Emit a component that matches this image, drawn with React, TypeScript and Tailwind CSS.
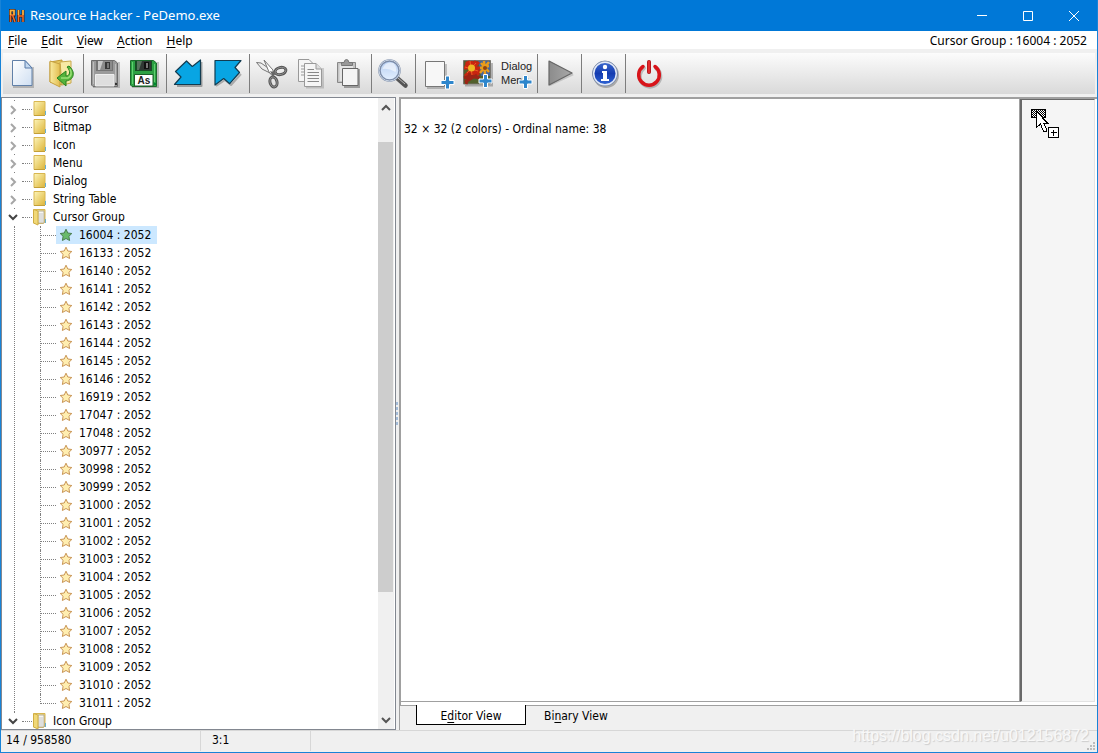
import React from 'react';

const folders = ['Cursor', 'Bitmap', 'Icon', 'Menu', 'Dialog', 'String Table'];
const cursorIds = [
  16004, 16133, 16140, 16141, 16142, 16143, 16144, 16145, 16146, 16919, 17047, 17048, 30977, 30998, 30999,
  31000, 31001, 31002, 31003, 31004, 31005, 31006, 31007, 31008, 31009, 31010, 31011,
];

function Key({ text, at = 0 }: { text: string; at?: number }) {
  return (
    <>
      {text.slice(0, at)}
      <span className="underline underline-offset-2">{text[at]}</span>
      {text.slice(at + 1)}
    </>
  );
}

/* ---------- toolbar ---------- */

function Plus({ x, y }: { x: number; y: number }) {
  return (
    <path
      transform={`translate(${x} ${y})`}
      d="M-2 -6.500H2V-2H6.500V2H2V6.500H-2V2H-6.500V-2H-2Z"
      fill="#2e86cc"
      stroke="#fff"
      strokeWidth="1"
    />
  );
}

function Floppy({ green }: { green?: boolean }) {
  return (
    <g>
      <path d="M7 33H33V8" stroke="#000" strokeOpacity=".2" strokeWidth="2" fill="none" />
      <path d="M5.500 6.500H28.500L31.500 9V32.500H7L5.500 31Z" fill={green ? '#2ca043' : '#9a9a9a'} stroke={green ? '#1c6a2c' : '#6c6c6c'} />
      <path d="M7.500 8V30M29.500 10V28" stroke={green ? '#5fd070' : '#bdbdbd'} />
      <path d="M10 7H27V17H10Z" fill={green ? '#174d25' : '#747474'} />
      <path d="M13 7H26V16H13Z" fill={green ? '#303834' : '#8b8b8b'} />
      <path d="M12 7H17L14 16H12Z" fill={green ? '#57735d' : '#c8c8c8'} />
      <path d="M19 8H24V15H19Z" fill={green ? '#101010' : '#383838'} />
      <path d="M21 9H23V14H21Z" fill="#777" />
      <path d="M9.500 20.500H28V32H9.500Z" fill={green ? '#fff' : '#dedede'} stroke={green ? '#1c5d2a' : '#eee'} />
      {green && (
        <text x="19" y="30" textAnchor="middle" fontFamily="Liberation Sans, sans-serif" fontSize="10" fontWeight="700" fill="#222">
          As
        </text>
      )}
      <path d="M29 29H31V31H29Z" fill={green ? '#083' : '#333'} />
    </g>
  );
}

const art: Record<string, React.ReactNode> = {
  New: (
    <g>
      <path d="M10 33H30V13" fill="none" stroke="#000" strokeOpacity=".2" strokeWidth="2" />
      <path d="M9.500 6.500H22L29 14V31.500H9.500Z" fill="url(#paper)" stroke="#6180a8" />
      <path d="M22 6.500V14H29Z" fill="#c3d8ef" stroke="#587ba9" />
    </g>
  ),
  Open: (
    <g>
      <path d="M8 8L20 6V31L8 28Z" fill="#e5c75e" stroke="#c09a35" />
      <path d="M18 8L29 7V29L20 31Z" fill="#f7e9a4" stroke="#c8a84c" />
      <path d="M8 7L18 10V33L8 28Z" fill="url(#gold)" stroke="#c6a040" />
      <path d="M27 12C34 18 32 26 24 27V32L15 24L24 17V22C28 22 29 17 25 13Z" fill="#55b43c" stroke="#28811f" />
      <path d="M28 15Q31 21 26 24L19 24" fill="none" stroke="#99df76" strokeWidth="1.500" />
    </g>
  ),
  Save: <Floppy />,
  'Save As': <Floppy green />,
  Compile: (
    <g strokeLinejoin="round">
      <path d="M32.500 8V32H8" stroke="#000" strokeOpacity=".3" strokeWidth="2" fill="none" />
      <path d="M31.500 6V30.500H5.500L12 23L6.500 17.500L17.500 7L23.300 12.500Z" fill="#08a5e3" stroke="#123c51" strokeWidth="1.200" />
    </g>
  ),
  Decompile: (
    <g strokeLinejoin="round">
      <path d="M8 32L17 26L23 31L33 20" stroke="#000" strokeOpacity=".25" strokeWidth="2" fill="none" />
      <path d="M7 6.500H33L27 13.500L31.500 18.500L21.700 29.700L15.700 24.500L7 31Z" fill="#08a5e3" stroke="#123c51" strokeWidth="1.200" />
    </g>
  ),
  Cut: (
    <g>
      <path d="M4.500 8.500L9 9L22 18L20 20L10 15Z" fill="#eee" stroke="#777" />
      <path d="M12 6L21 16L20.500 22L17 18Z" fill="#fff" stroke="#777" />
      <ellipse cx="28.500" cy="17" rx="5.500" ry="3.500" transform="rotate(-15 28.500 17)" fill="none" stroke="#555" strokeWidth="3" />
      <ellipse cx="21.500" cy="28" rx="3.500" ry="5" transform="rotate(-15 21.500 28)" fill="none" stroke="#555" strokeWidth="3" />
      <path d="M18 17L24 19L21 23Z" fill="#666" />
      <ellipse cx="28.500" cy="17" rx="5.500" ry="3.500" transform="rotate(-15 28.500 17)" fill="none" stroke="#999" strokeWidth=".8" />
      <ellipse cx="21.500" cy="28" rx="3.500" ry="5" transform="rotate(-15 21.500 28)" fill="none" stroke="#999" strokeWidth=".8" />
    </g>
  ),
  Copy: (
    <g fill="#f5f5f5" stroke="#999">
      <path d="M7.500 5.500H18L23.500 11V27.500H7.500Z" />
      <path d="M10 12H16M10 15H16M10 18H16M10 21H16" />
      <path d="M15 33.500H32V14" fill="none" stroke="#000" strokeOpacity=".15" strokeWidth="2" />
      <path d="M13.500 9.500H25L30.500 15V32.500H13.500Z" />
      <path d="M25 9.500V15H30.500" fill="#ddd" />
      <path d="M16.500 15.500H23M16.500 18.500H28M16.500 21.500H28M16.500 24.500H28M16.500 27.500H28" stroke="#888" />
    </g>
  ),
  Paste: (
    <g>
      <path d="M7.500 8.500H25.500V28.500H7.500Z" fill="#c4c4c4" stroke="#888" />
      <path d="M9.500 10.500H23V27H9.500Z" fill="#e4e4e4" />
      <path d="M11.500 10.500V8.500H14Q14.500 5.500 16.500 5.500T19 8.500H22.500V11.500H11.500Z" fill="#999" stroke="#777" />
      <path d="M14 33H29V15" fill="none" stroke="#000" strokeOpacity=".3" strokeWidth="2" />
      <path d="M12.500 14.500H28V31.500H12.500Z" fill="#f4f4f4" stroke="#666" />
    </g>
  ),
  Find: (
    <g>
      <path d="M23 24L31.500 31.500" stroke="#555" strokeWidth="4.500" strokeLinecap="round" />
      <path d="M24 24L31 30" stroke="#bbb" strokeWidth="1" />
      <circle cx="15.500" cy="16.500" r="10" fill="url(#lens)" stroke="#7c8ca8" strokeWidth="2.500" />
      <circle cx="15.500" cy="16.500" r="10.500" fill="none" stroke="#cad5e4" strokeWidth="1" />
      <path d="M8.500 15Q11.500 7 19.500 9Q23.500 13 21.500 18Q14.500 14 8.500 15Z" fill="#fff" opacity=".55" />
    </g>
  ),
  'Add resource': (
    <g>
      <path d="M9 34H28V10" fill="none" stroke="#000" strokeOpacity=".2" strokeWidth="2" />
      <path d="M7.500 7.500H26.500V32.500H7.500Z" fill="#f7f7f7" stroke="#777" />
      <Plus x={29.5} y={28.5} />
    </g>
  ),
  'Add image': (
    <g>
      <path d="M8 31.500H35V9" stroke="#000" strokeOpacity=".25" strokeWidth="2" fill="none" />
      <g transform="translate(1 0)">
        <path d="M5.500 6.500H32.500V30H5.500Z" fill="#52602c" stroke="#77756f" />
        <path d="M20 7H32V22H23Z" fill="#44659b" />
        <g stroke="#c92510" strokeWidth="3">
          <path d="M6 14H22M14 7V23M8 8L21 21M21 8L7 22M10 7L18 22M7 11L22 18M18 7L9 23" />
        </g>
        <path d="M6 24L12 22L22 24M7 28L19 21M8 30L12 19" stroke="#9d2415" strokeWidth="3" />
        <path d="M22 14L31 12M26 7L27 20M23 9L31 18M22 19L31 8" stroke="#e99c1b" strokeWidth="2.500" />
        <path d="M7 13L20 17M12 7L14 21M18 9L9 19" stroke="#ef5b26" />
        <circle cx="13.500" cy="14" r="3.500" fill="#edb824" />
        <circle cx="27" cy="14" r="2" fill="#8d4310" />
      </g>
      <Plus x={28.5} y={27} />
    </g>
  ),
  'Add dialog or menu': (
    <g fontFamily="Liberation Sans, sans-serif" fontSize="11" fill="#222">
      <text x="5" y="16">Dialog</text>
      <text x="5" y="30">Menu</text>
      <Plus x={29.5} y={28} />
    </g>
  ),
  Run: (
    <g>
      <path d="M9 31L33 20" stroke="#000" strokeOpacity=".15" strokeWidth="3" />
      <path d="M9 7L32 19L9 31Z" fill="url(#steel)" stroke="#666" strokeWidth="1.200" strokeLinejoin="round" />
    </g>
  ),
  About: (
    <g>
      <ellipse cx="22" cy="21" rx="13" ry="13" fill="#000" opacity=".25" />
      <circle cx="21" cy="19.500" r="12.500" fill="url(#blue)" stroke="#8793a5" />
      <circle cx="21" cy="19.500" r="11.300" fill="none" stroke="#e5eaf5" strokeWidth="1.500" />
      <circle cx="21" cy="13" r="2.200" fill="#fff" />
      <path d="M18 17H23V25H25V27H17V25H19V19H18Z" fill="#fff" />
    </g>
  ),
  Exit: (
    <g fill="none" strokeLinecap="round" transform="translate(1 0)">
      <path d="M14 13A10.300 10.300 0 1 0 26 13" stroke="#000" strokeOpacity=".2" strokeWidth="4" transform="translate(1 1)" />
      <path d="M14 12.500A10.300 10.300 0 1 0 26 12.500" stroke="#d8141a" strokeWidth="3.500" />
      <path d="M20 8V18" stroke="#a91518" strokeWidth="4" />
      <path d="M20 8V18" stroke="#e32b2e" strokeWidth="2.500" />
    </g>
  ),
};

const toolGroups = [
  ['New', 'Open'],
  ['Save', 'Save As'],
  ['Compile', 'Decompile'],
  ['Cut', 'Copy', 'Paste'],
  ['Find'],
  ['Add resource', 'Add image', 'Add dialog or menu'],
  ['Run'],
  ['About'],
  ['Exit'],
];

function Toolbar() {
  return (
    <div role="toolbar" aria-label="Main" className="mx-0.5 mt-1 mb-[3px] flex h-[41px] shrink-0 bg-linear-to-b from-[#fcfcfc] to-[#d9d9d9]">
      <svg width="0" height="0" className="absolute" aria-hidden="true">
        <defs>
          <linearGradient id="paper" x1="0" y1="0" x2="1" y2="1"><stop stopColor="#fff" /><stop offset="1" stopColor="#cfdff2" /></linearGradient>
          <linearGradient id="gold"><stop stopColor="#f9eb9f" /><stop offset="1" stopColor="#e2bd50" /></linearGradient>
          <linearGradient id="folder" x1="0" y1="0" x2="1" y2="1"><stop stopColor="#fdf5b9" /><stop offset="1" stopColor="#dcb336" /></linearGradient>
          <linearGradient id="steel"><stop stopColor="#8c8c8c" /><stop offset="1" stopColor="#a8a8a8" /></linearGradient>
          <linearGradient id="lens" x1="0" y1="0" x2="0" y2="1"><stop stopColor="#b5cdf0" /><stop offset="1" stopColor="#e4f0ff" /></linearGradient>
          <linearGradient id="blue" x1="0" y1="0" x2="0" y2="1"><stop stopColor="#3f6ed1" /><stop offset=".5" stopColor="#153cb1" /><stop offset="1" stopColor="#3269d9" /></linearGradient>
        </defs>
      </svg>
      {toolGroups.map((group, i) => (
        <React.Fragment key={group[0]}>
          {i > 0 && <div className="mx-0.5 my-px w-px bg-[#7d7d7d]" />}
          {group.map((name) => (
            <button key={name} aria-label={name} className="w-[39px]">
              <svg width="39" height="40" viewBox="0 0 39 40" aria-hidden="true">{art[name]}</svg>
            </button>
          ))}
        </React.Fragment>
      ))}
    </div>
  );
}

/* ---------- tree ---------- */

function Chevron({ open }: { open?: boolean }) {
  return (
    <svg width="12" height="18" viewBox="0 0 12 18" className="bg-white" fill="none" aria-hidden="true">
      {open ? <path d="M2 7L6 11L10 7" stroke="#444" strokeWidth="2" /> : <path d="M4 6L8 10L4 14" stroke="#a6a6a6" strokeWidth="2" />}
      <path d="M7.500 0V1" stroke="#808080" />
    </svg>
  );
}

function Folder({ open }: { open?: boolean }) {
  return (
    <svg width="14" height="18" viewBox="0 0 14 18" aria-hidden="true">
      <path d="M1 1.500H12V14L10 15.500H1Z" fill="url(#folder)" stroke="#d8b650" strokeWidth="1" />
      {open ? (
        <g>
          <path d="M5 3H11V15H5Z" fill="#f6f6f2" stroke="#b5ad94" />
          <path d="M7 5V14M9 5V14" stroke="#c7c7c7" />
          <path d="M.500 1.500L5 3V17L.500 15Z" fill="#f0d878" stroke="#d1ae43" />
        </g>
      ) : (
        <path d="M1 15.500H12" stroke="#c39f36" />
      )}
      <path d="M12.500 11V15" stroke="#67afd0" />
    </svg>
  );
}

function Star({ green }: { green?: boolean }) {
  return (
    <svg width="14" height="14" viewBox="0 0 14 14" aria-hidden="true">
      <path
        d="M7 1.200L8.800 5L12.800 5.500L9.900 8.300L10.600 12.500L7 10.500L3.400 12.500L4.100 8.300L1.200 5.500L5.200 5Z"
        fill={green ? '#6aba6b' : '#ffeeb0'}
        stroke={green ? '#4b7d50' : '#c99555'}
        strokeLinejoin="round"
      />
    </svg>
  );
}

function Branch({ label, open, children }: { label: string; open?: boolean; children?: React.ReactNode }) {
  return (
    <li role="treeitem" aria-expanded={!!open}>
      <div className="flex h-[18px] items-center pl-[5px]">
        <Chevron open={open} />
        <span className="ml-[3px] w-2.5 border-t border-dotted border-[#808080]" />
        <span className="ml-px"><Folder open={open} /></span>
        <span className="ml-1.5">{label}</span>
      </div>
      {children}
    </li>
  );
}

function Tree() {
  return (
    <section aria-label="Resources" className="flex w-[395px] shrink-0 border border-[#828790] bg-white">
      <ul role="tree" className="min-w-0 flex-1 overflow-hidden pt-0.5">
        {folders.map((name) => <Branch key={name} label={name} />)}
        <Branch label="Cursor Group" open>
          <ul role="group" className="ml-3 border-l border-dotted border-[#808080]">
            {cursorIds.map((id, i) => (
              <li key={id} role="treeitem" aria-selected={i === 0} className="flex h-[18px] pl-[25px]">
                <span className={i === cursorIds.length - 1 ? 'h-2.5 w-4 border-b border-l border-dotted border-[#808080]' : 'flex w-4 items-center border-l border-dotted border-[#808080]'}>
                  {i < cursorIds.length - 1 && <span className="w-full border-t border-dotted border-[#808080]" />}
                </span>
                <span className={i === 0 ? 'flex items-center gap-1.5 bg-[#cce8ff] pr-1.5 pl-[3px]' : 'flex items-center gap-1.5 pr-1.5 pl-[3px]'}>
                  <Star green={i === 0} />
                  {id} : 2052
                </span>
              </li>
            ))}
          </ul>
        </Branch>
        <Branch label="Icon Group" open />
      </ul>
      <div className="mr-px flex w-4 flex-col bg-[#f0f0f0]">
        <button aria-label="Scroll up" className="flex h-11 justify-center pt-1.5">
          <svg width="10" height="8" viewBox="0 0 10 8" fill="none"><path d="M1 6L5 2L9 6" stroke="#555" strokeWidth="2" /></svg>
        </button>
        <div className="mr-px flex-[450] bg-[#cdcdcd]" />
        <div className="flex-[120]" />
        <button aria-label="Scroll down" className="flex h-[17px] justify-center pt-1">
          <svg width="10" height="8" viewBox="0 0 10 8" fill="none"><path d="M1 2L5 6L9 2" stroke="#555" strokeWidth="2" /></svg>
        </button>
      </div>
    </section>
  );
}

/* ---------- preview ---------- */

function DragCursor() {
  return (
    <svg width="30" height="30" viewBox="0 0 30 30" shapeRendering="crispEdges" role="img" aria-label="Drag cursor">
      <defs>
        <pattern id="checker" width="2" height="2" patternUnits="userSpaceOnUse">
          <path d="M0 0H1V1H0ZM1 1H2V2H1Z" fill="#000" />
        </pattern>
      </defs>
      <path d="M.500 .500H14.500V8.500H.500Z" fill="#fff" stroke="#000" />
      <path d="M1 1H14V8H1Z" fill="url(#checker)" />
      <path d="M5.500 2.500V18.500L9.500 15L12.500 22.500H15.500V20L12.500 14H16.500Z" fill="#fff" stroke="#000" />
      <path d="M17.500 18.500H27.500V28.500H17.500Z" fill="#fff" stroke="#000" />
      <path d="M19.500 23.500H25.500M22.500 20.500V26.500" stroke="#000" />
    </svg>
  );
}

function Workspace() {
  return (
    <main className="flex min-w-0 flex-1 flex-col border-l border-[#a0a0a0]">
      <div className="flex min-h-0 flex-1 border-t-2 border-l border-[#a0a0a0] bg-white pr-0.5 pb-[3px]">
        <div className="flex-1 border-r border-b border-[#a0a0a0] pt-[22px] pl-[3px]">
          <p>32 × 32 (2 colors) - Ordinal name: 38</p>
        </div>
        <div className="w-[75px] border-t border-r border-b border-l-2 border-t-[#696969] border-r-[#e3e3e3] border-b-[#e3e3e3] border-l-[#696969] bg-[#f5f5f5] pt-[9px] pl-[9px]">
          <DragCursor />
        </div>
      </div>
      <div role="tablist" className="flex h-[25px] shrink-0">
        <div className="w-4 border-t border-[#a0a0a0]" />
        <button role="tab" aria-selected="true" className="h-5 w-[110px] border-x border-b border-black bg-white pt-0.5">
          <Key text="Editor View" at={1} />
        </button>
        <div className="flex-1 border-t border-[#a0a0a0]">
          <button role="tab" aria-selected="false" className="ml-[18px] h-5">
            <Key text="Binary View" at={2} />
          </button>
        </div>
      </div>
    </main>
  );
}

export default function App() {
  return (
    <div className="relative flex h-screen flex-col border-x border-b border-[#1883d7] bg-[#f0f0f0] text-xs text-black font-['DejaVu_Sans_Condensed','Noto_Sans',sans-serif]">
      <header className="flex h-[31px] shrink-0 items-center bg-[#0078d7] pl-[7px] font-['Noto_Sans',sans-serif] text-[13px] text-white">
        <svg width="18" height="18" viewBox="0 0 18 18" fill="none" aria-hidden="true">
          <g stroke="#3b2018" strokeWidth="3"><path d="M2.500 15V3.500H6V8H2.500M4.500 8L7 15M10.500 3V15M15 3V15M10.500 9H15" /></g>
          <g stroke="#ef6c2c" strokeWidth="1.500"><path d="M2.500 15V3.500H6V8H2.500M4.500 8L7 15M10.500 3V15M15 3V15M10.500 9H15" /></g>
          <path d="M2.500 8V3.500H6V8M10.500 3V8M15 3V8" stroke="#f4b73f" strokeWidth="1.500" />
        </svg>
        <h1 className="ml-1 flex-1">Resource Hacker - PeDemo.exe</h1>
        <button aria-label="Minimize" className="flex h-full w-[46px] items-center justify-center">
          <svg width="10" height="11" viewBox="0 0 10 11"><path d="M0 5.500H10" stroke="#fff" /></svg>
        </button>
        <button aria-label="Maximize" className="flex h-full w-[46px] items-center justify-center">
          <svg width="10" height="10" viewBox="0 0 10 10"><path d="M.500 .500H9.500V9.500H.500Z" fill="none" stroke="#fff" /></svg>
        </button>
        <button aria-label="Close" className="flex h-full w-[46px] items-center justify-center">
          <svg width="10" height="10" viewBox="0 0 10 10"><path d="M0 0L10 10M10 0L0 10" stroke="#fff" /></svg>
        </button>
      </header>
      <nav className="flex h-[18px] shrink-0 items-center gap-3.5 bg-white pt-0.5 pr-2.5 pl-[7px] font-['Noto_Sans',sans-serif]">
        {['File', 'Edit', 'View', 'Action', 'Help'].map((name) => (
          <button key={name}><Key text={name} /></button>
        ))}
        <span className="ml-auto">Cursor Group : 16004 : 2052</span>
      </nav>
      <Toolbar />
      <div className="flex min-h-0 flex-1">
        <Tree />
        <div role="separator" aria-orientation="vertical" className="flex w-[3px] shrink-0 flex-col items-start justify-center gap-0.5">
          {[0, 1, 2, 3, 4].map((n) => <span key={n} className="h-[3px] w-0.5 bg-[#a3bbd8]" />)}
        </div>
        <Workspace />
      </div>
      <footer className="flex h-[22px] shrink-0 border-t border-[#d7d7d7] pb-px leading-[19px]">
        <span className="w-[200px] border-r border-[#d7d7d7] pl-[5px]">14 / 958580</span>
        <span className="w-[110px] border-r border-[#d7d7d7] pl-[11px]">3:1</span>
        <svg width="9" height="9" viewBox="0 0 9 9" className="mr-px ml-auto self-end" aria-hidden="true">
          <path d="M6 0H8V2H6ZM3 3H5V5H3ZM6 3H8V5H6ZM0 6H2V8H0ZM3 6H5V8H3ZM6 6H8V8H6Z" fill="#bcbcbc" />
        </svg>
      </footer>
      <div className="pointer-events-none absolute right-2 bottom-1.5 font-['Liberation_Sans',sans-serif] text-base leading-5 text-[#f8f8f8] [text-shadow:1px_1px_1px_#cccccc]">
        https://blog.csdn.net/u012156872
      </div>
    </div>
  );
}
